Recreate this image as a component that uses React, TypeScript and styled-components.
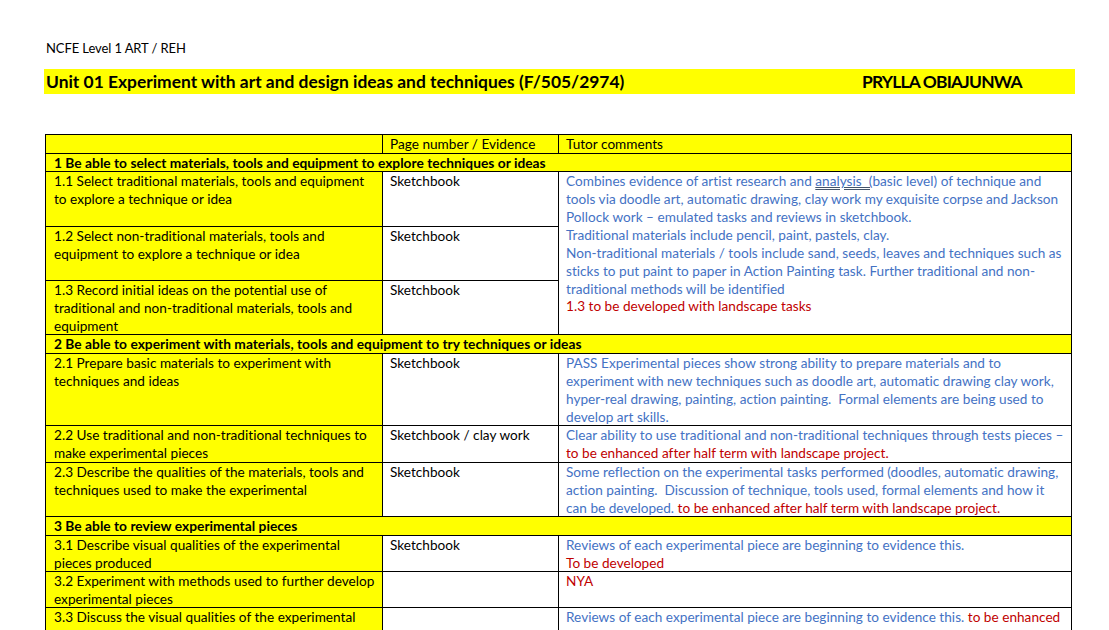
import React from "react";
import styled, { createGlobalStyle } from "styled-components";

const Global = createGlobalStyle`
  html, body { margin: 0; padding: 0; height: 630px; overflow: hidden; background: #fff; }
  body { font-family: Lato, "Liberation Sans", sans-serif; color: #000; font-variant-ligatures: none; }
`;

const Page = styled.div`
  width: 1109px;
  height: 630px;
  overflow: hidden;
  padding: 39px 0 0 44px;
  box-sizing: border-box;
`;

const Level = styled.div`
  font-size: 13px;
  line-height: 18px;
  padding-left: 2px;
  letter-spacing: -0.1px;
`;

const TitleBar = styled.div`
  width: 1031px;
  height: 25px;
  margin-top: 12px;
  background: #ffff00;
  display: flex;
  align-items: center;
  padding: 0 0 1px 2px;
  box-sizing: border-box;
  font-size: 17.4px;
  font-weight: 700;
  white-space: nowrap;
`;

const TitleText = styled.span`
  width: 816px;
  flex: none;
`;

const Student = styled.span`
  letter-spacing: -0.8px;
`;

const Sheet = styled.div`
  display: grid;
  grid-template-columns: 337px 176px 513px;
  grid-template-rows: 19px 18px 55px 54px 54px 19px 72px 37px 54px 19px 36px 36px 60px;
  width: 1027px;
  margin: 40px 0 0 1px;
  border-top: 1px solid #000;
  border-left: 1px solid #000;
  box-sizing: border-box;
  font-size: 13.6px;
  line-height: 18px;
  letter-spacing: 0.02px;
`;

const Cell = styled.div<{ $fill?: boolean; $rows?: number }>`
  border-right: 1px solid #000;
  border-bottom: 1px solid #000;
  padding: 0 7px;
  white-space: nowrap;
  background: ${(p) => (p.$fill ? "#ffff00" : "#fff")};
  grid-row: ${(p) => (p.$rows ? `span ${p.$rows}` : "auto")};
`;

const Criterion = styled(Cell).attrs({ $fill: true })`
  padding-left: 8px;
`;

const Section = styled(Cell).attrs({ $fill: true })`
  grid-column: 1 / -1;
  padding-left: 8px;
  font-size: 13.75px;
  font-weight: 700;
`;

const Blue = styled.span`
  color: #4472c4;
`;

const Red = styled.span`
  color: #c00000;
`;

const RedLine = styled.div`
  color: #c00000;
  margin-top: -1px;
`;

const Flagged = styled.span`
  text-decoration: underline double #44546a 1px;
  text-underline-offset: 1px;
`;

export default function App() {
  return (
    <Page>
      <Global />
      <Level>NCFE Level 1 ART / REH</Level>
      <TitleBar>
        <TitleText>Unit 01 Experiment with art and design ideas and techniques (F/505/2974)</TitleText>
        <Student>PRYLLA OBIAJUNWA</Student>
      </TitleBar>
      <Sheet>
        <Cell $fill />
        <Cell $fill>Page number / Evidence</Cell>
        <Cell $fill>Tutor comments</Cell>

        <Section>1 Be able to select materials, tools and equipment to explore techniques or ideas</Section>

        <Criterion>1.1 Select traditional materials, tools and equipment<br />to explore a technique or idea</Criterion>
        <Cell>Sketchbook</Cell>
        <Cell $rows={3}>
          <Blue>
            Combines evidence of artist research and <Flagged>analysis&nbsp; (</Flagged>basic level) of technique and<br />
            tools via doodle art, automatic drawing, clay work my exquisite corpse and Jackson<br />
            Pollock work – emulated tasks and reviews in sketchbook.<br />
            Traditional materials include pencil, paint, pastels, clay.<br />
            Non-traditional materials / tools include sand, seeds, leaves and techniques such as<br />
            sticks to put paint to paper in Action Painting task. Further traditional and non-<br />
            traditional methods will be identified
          </Blue>
          <RedLine>1.3 to be developed with landscape tasks</RedLine>
        </Cell>
        <Criterion>1.2 Select non-traditional materials, tools and<br />equipment to explore a technique or idea</Criterion>
        <Cell>Sketchbook</Cell>
        <Criterion>1.3 Record initial ideas on the potential use of<br />traditional and non-traditional materials, tools and<br />equipment</Criterion>
        <Cell>Sketchbook</Cell>

        <Section>2 Be able to experiment with materials, tools and equipment to try techniques or ideas</Section>

        <Criterion>2.1 Prepare basic materials to experiment with<br />techniques and ideas</Criterion>
        <Cell>Sketchbook</Cell>
        <Cell>
          <Blue>
            PASS Experimental pieces show strong ability to prepare materials and to<br />
            experiment with new techniques such as doodle art, automatic drawing clay work,<br />
            hyper-real drawing, painting, action painting.&nbsp; Formal elements are being used to<br />
            develop art skills.
          </Blue>
        </Cell>
        <Criterion>2.2 Use traditional and non-traditional techniques to<br />make experimental pieces</Criterion>
        <Cell>Sketchbook / clay work</Cell>
        <Cell>
          <Blue>Clear ability to use traditional and non-traditional techniques through tests pieces –</Blue>
          <br />
          <Red>to be enhanced after half term with landscape project.</Red>
        </Cell>
        <Criterion>2.3 Describe the qualities of the materials, tools and<br />techniques used to make the experimental</Criterion>
        <Cell>Sketchbook</Cell>
        <Cell>
          <Blue>
            Some reflection on the experimental tasks performed (doodles, automatic drawing,<br />
            action painting.&nbsp; Discussion of technique, tools used, formal elements and how it<br />
            can be developed.
          </Blue>{" "}
          <Red>to be enhanced after half term with landscape project.</Red>
        </Cell>

        <Section>3 Be able to review experimental pieces</Section>

        <Criterion>3.1 Describe visual qualities of the experimental<br />pieces produced</Criterion>
        <Cell>Sketchbook</Cell>
        <Cell>
          <Blue>Reviews of each experimental piece are beginning to evidence this.</Blue>
          <br />
          <Red>To be developed</Red>
        </Cell>
        <Criterion>3.2 Experiment with methods used to further develop<br />experimental pieces</Criterion>
        <Cell />
        <Cell><Red>NYA</Red></Cell>
        <Criterion>3.3 Discuss the visual qualities of the experimental</Criterion>
        <Cell />
        <Cell>
          <Blue>Reviews of each experimental piece are beginning to evidence this.</Blue>{" "}
          <Red>to be enhanced</Red>
        </Cell>
      </Sheet>
    </Page>
  );
}
